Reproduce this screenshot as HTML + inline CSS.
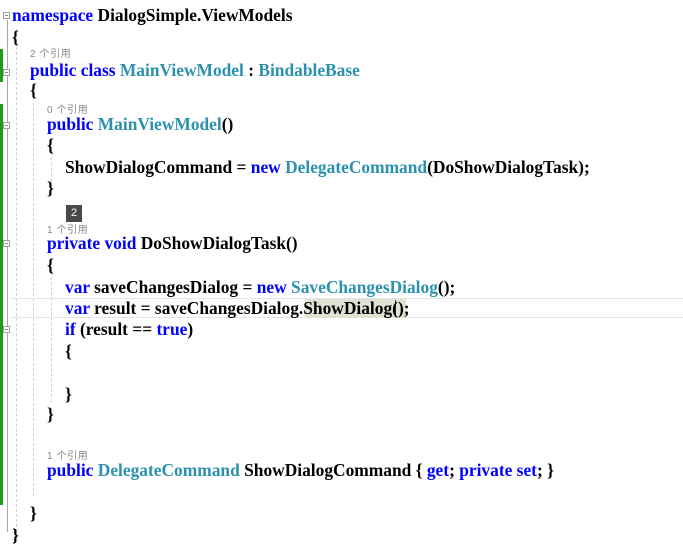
<!DOCTYPE html>
<html><head><meta charset="utf-8"><style>
body{margin:0;width:683px;height:548px;background:#fff;position:relative;overflow:hidden;font-family:"Liberation Serif",serif;font-weight:bold;font-size:17.4px;color:#000}
.l{position:absolute;white-space:pre;line-height:20px}
.k{color:#0000ff}.t{color:#2b91af}
.c{position:absolute;font-family:"Liberation Sans","Noto Sans CJK SC",sans-serif;font-weight:normal;font-size:10px;letter-spacing:0.6px;color:#888;white-space:pre}
.g{position:absolute;left:0;width:3px;background:#1e9a1e}
.v{position:absolute;border-left:1px dashed #d0d0d0}
.f{position:absolute;left:3px;width:7px;height:7px;border:1px solid #a0a0a0;background:#fff;box-sizing:border-box}
.f:after{content:"";position:absolute;left:1px;top:2px;width:3px;height:1px;background:#888}
</style></head><body>
<div class="g" style="top:49px;height:33px"></div>
<div class="g" style="top:104px;height:401px"></div>
<div style="position:absolute;left:7px;top:20px;width:1px;height:512px;background:#a8a8a8"></div>
<div class="v" style="left:16px;top:42px;height:490px"></div>
<div class="v" style="left:33px;top:98px;height:398px"></div>
<div class="v" style="left:51px;top:152px;height:30px"></div>
<div class="v" style="left:51px;top:272px;height:130px"></div>
<div class="f" style="top:12px"></div>
<div class="f" style="top:69px"></div>
<div class="f" style="top:122px"></div>
<div class="f" style="top:240px"></div>
<div class="f" style="top:326px"></div>
<div style="position:absolute;left:10px;top:298px;width:673px;height:20px;border-top:1px solid #e4e4e4;border-bottom:1px solid #e4e4e4;box-sizing:border-box"></div>
<div style="position:absolute;left:305px;top:299px;width:101px;height:19px;background:#dfe3d3"></div>
<div style="position:absolute;left:395px;top:300px;width:1px;height:17px;background:#333"></div>
<div style="position:absolute;left:66px;top:205px;width:16px;height:17px;background:#4a4a4a;color:#fff;font-family:'Liberation Sans',sans-serif;font-weight:normal;font-size:11px;text-align:center;line-height:17px">2</div>

<div class="l" style="left:12px;top:5px"><span class="k">namespace</span> DialogSimple.ViewModels</div>
<div class="l" style="left:12px;top:27px">{</div>
<div class="c" style="left:30px;top:45px">2 个引用</div>
<div class="l" style="left:30px;top:60px"><span class="k">public class</span> <span class="t">MainViewModel</span> : <span class="t">BindableBase</span></div>
<div class="l" style="left:30px;top:80px">{</div>
<div class="c" style="left:47px;top:101px">0 个引用</div>
<div class="l" style="left:47px;top:114px"><span class="k">public</span> <span class="t">MainViewModel</span>()</div>
<div class="l" style="left:47px;top:135px">{</div>
<div class="l" style="left:65px;top:157px">ShowDialogCommand = <span class="k">new</span> <span class="t">DelegateCommand</span>(DoShowDialogTask);</div>
<div class="l" style="left:47px;top:178px">}</div>
<div class="c" style="left:47px;top:221px">1 个引用</div>
<div class="l" style="left:47px;top:233px"><span class="k">private void</span> DoShowDialogTask()</div>
<div class="l" style="left:47px;top:255px">{</div>
<div class="l" style="left:65px;top:277px"><span class="k">var</span> saveChangesDialog = <span class="k">new</span> <span class="t">SaveChangesDialog</span>();</div>
<div class="l" style="left:65px;top:298px"><span class="k">var</span> result = saveChangesDialog.ShowDialog();</div>
<div class="l" style="left:65px;top:319px"><span class="k">if</span> (result == <span class="k">true</span>)</div>
<div class="l" style="left:65px;top:341px">{</div>
<div class="l" style="left:65px;top:384px">}</div>
<div class="l" style="left:47px;top:404px">}</div>
<div class="c" style="left:47px;top:447px">1 个引用</div>
<div class="l" style="left:47px;top:460px"><span class="k">public</span> <span class="t">DelegateCommand</span> ShowDialogCommand { <span class="k">get</span>; <span class="k">private set</span>; }</div>
<div class="l" style="left:30px;top:503px">}</div>
<div class="l" style="left:12px;top:525px">}</div>
</body></html>
